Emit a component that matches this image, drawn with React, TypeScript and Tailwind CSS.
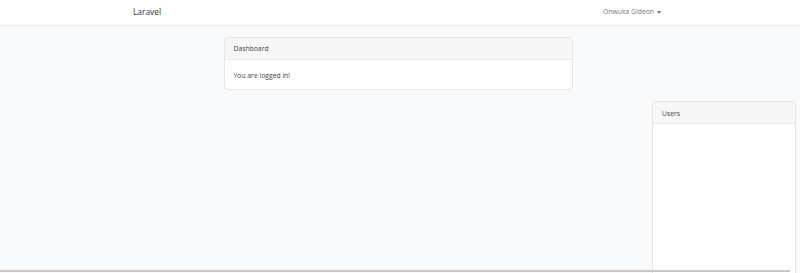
export default function App() {
  return (
    <div className="relative h-[273px] w-[800px] overflow-hidden bg-[#f8fafc] text-[#212529]" style={{ fontFamily: '"Open Sans", "Noto Sans", sans-serif' }}>
      <nav className="relative z-10 flex h-[25px] items-center justify-between bg-white pl-[133px] pr-[139px] shadow-[0_1px_2px_rgba(0,0,0,0.06)]">
        <span className="text-[8.4px] leading-none text-[#333]">Laravel</span>
        <span className="flex items-center gap-[3px] text-[6.8px] leading-none text-[#777]">
          Onwuka Gideon
          <span className="inline-block h-0 w-0 border-x-[2.5px] border-t-[3px] border-x-transparent border-t-[#777]" />
        </span>
      </nav>
      <div className="flex justify-center pt-[12px]">
        <div className="ml-[-4px] w-[349px] rounded-[3px] border border-[#e6e6e6] bg-white">
          <div className="flex h-[22px] items-center border-b border-[#e9e9e9] bg-[#f7f7f7] px-[9px] pt-[1px] text-[6.8px] text-[#444]">Dashboard</div>
          <div className="flex h-[29px] items-center px-[9px] pt-[3px] text-[6.8px] text-[#444]">You are logged in!</div>
        </div>
      </div>
      <div className="flex justify-end pr-[4px] pt-[11px]">
        <div className="h-[200px] w-[144px] rounded-[3px] border border-[#e6e6e6] bg-white">
          <div className="flex h-[22px] items-center border-b border-[#e9e9e9] bg-[#f7f7f7] px-[9px] pt-[3px] text-[6.8px] text-[#444]">Users</div>
        </div>
      </div>
      <div className="absolute bottom-[1px] left-0 h-[2px] w-[790px] bg-[#c8c8c8]" />
    </div>
  );
}
